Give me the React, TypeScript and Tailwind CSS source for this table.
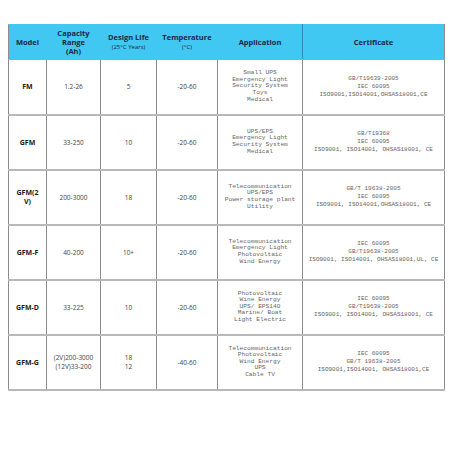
import React from "react";

const rows = [
  {
    model: ["FM"],
    cap: ["1.2-26"],
    life: ["5"],
    temp: "-20-60",
    app: ["Small UPS", "Emergency Light", "Security System", "Toys", "Medical"],
    cert: ["GB/T19639-2005", "IEC 60095", "ISO9001,ISO14001,OHSAS18001,CE"],
  },
  {
    model: ["GFM"],
    cap: ["33-250"],
    life: ["10"],
    temp: "-20-60",
    app: ["UPS/EPS", "Emergency Light", "Security System", "Medical"],
    cert: ["GB/T19368", "IEC 60095", "ISO9001, ISO14001, OHSAS18001, CE"],
  },
  {
    model: ["GFM(2", "V)"],
    cap: ["200-3000"],
    life: ["18"],
    temp: "-20-60",
    app: ["Telecommunication", "UPS/EPS", "Power storage plant", "Utility"],
    cert: ["GB/T 19638-2005", "IEC 60095", "ISO9001, ISO14001,OHSAS18001, CE"],
  },
  {
    model: ["GFM-F"],
    cap: ["40-200"],
    life: ["10+"],
    temp: "-20-60",
    app: ["Telecommunication", "Emergency Light", "Photovoltaic", "Wind Energy"],
    cert: ["IEC 60095", "GB/T19638-2005", "ISO9001, ISO14001, OHSAS18001,UL, CE"],
  },
  {
    model: ["GFM-D"],
    cap: ["33-225"],
    life: ["10"],
    temp: "-20-60",
    app: ["Photovoltaic", "Wine Energy", "UPS/ EPS140", "Marine/ Boat", "Light Electric"],
    cert: ["IEC 60095", "GB/T19638-2005", "ISO9001, ISO14001, OHSAS18001, CE"],
  },
  {
    model: ["GFM-G"],
    cap: ["(2V)200-3000", "(12V)33-200"],
    life: ["18", "12"],
    temp: "-40-60",
    app: ["Telecommunication", "Photovoltaic", "Wind Energy", "UPS", "Cable TV"],
    cert: ["IEC 60095", "GB/T 19638-2005", "ISO9001,ISO14001, OHSAS18001,CE"],
  },
];

const cell = "border border-[#8c8c8c] text-center align-middle p-0";

export default function App() {
  return (
    <div className="w-[453px] h-[453px] bg-white pt-[24px] pl-[8px]">
      <table
        className="border-collapse table-fixed"
        style={{ fontFamily: "'Open Sans', 'Liberation Sans', sans-serif" }}
      >
        <colgroup>
          <col className="w-[38px]" />
          <col className="w-[54px]" />
          <col className="w-[56px]" />
          <col className="w-[61px]" />
          <col className="w-[85px]" />
          <col className="w-[142px]" />
        </colgroup>
        <thead>
          <tr className="h-[35px] bg-[#41c8f2] text-[#1c2745] text-[7.5px] leading-[9px] font-bold">
            <th className="border border-[#41c8f2] border-l-[#8c8c8c]">Model</th>
            <th className="border border-[#41c8f2]">
              Capacity
              <br />
              Range
              <br />
              (Ah)
            </th>
            <th className="border border-[#41c8f2]">
              Design Life
              <br />
              <span className="font-normal text-[6px]">(25°C Years)</span>
            </th>
            <th className="border border-[#41c8f2]">
              Temperature
              <br />
              <span className="font-normal text-[6px]">(°C)</span>
            </th>
            <th className="border border-[#41c8f2] border-r-[#2f8fb0]">Application</th>
            <th className="border border-[#41c8f2] border-r-[#8c8c8c]">Certificate</th>
          </tr>
        </thead>
        <tbody>
          {rows.map((r, i) => (
            <tr key={i} className="h-[55px] border-b-[2px] border-[#b8b8b8]">
              <td className={`${cell} font-bold text-[7px] leading-[9px] text-[#1a1a1a]`}>
                {r.model.map((m) => (
                  <div key={m}>{m}</div>
                ))}
              </td>
              <td className={`${cell} text-[6.5px] leading-[9px] text-[#444]`}>
                {r.cap.map((m) => (
                  <div key={m}>{m}</div>
                ))}
              </td>
              <td className={`${cell} text-[6.5px] leading-[9px] text-[#444]`}>
                {r.life.map((m) => (
                  <div key={m}>{m}</div>
                ))}
              </td>
              <td className={`${cell} text-[6.5px] leading-[9px] text-[#444]`}>{r.temp}</td>
              <td
                className={`${cell} text-[6.2px] leading-[6.6px] text-[#666] whitespace-pre`}
                style={{ fontFamily: "'Liberation Mono', monospace" }}
              >
                {r.app.map((a) => (
                  <div key={a}>{a}</div>
                ))}
              </td>
              <td
                className={`${cell} text-[6px] leading-[8px] text-[#666] whitespace-pre`}
                style={{ fontFamily: "'Liberation Mono', monospace" }}
              >
                {r.cert.map((c) => (
                  <div key={c}>{c}</div>
                ))}
              </td>
            </tr>
          ))}
        </tbody>
      </table>
    </div>
  );
}
